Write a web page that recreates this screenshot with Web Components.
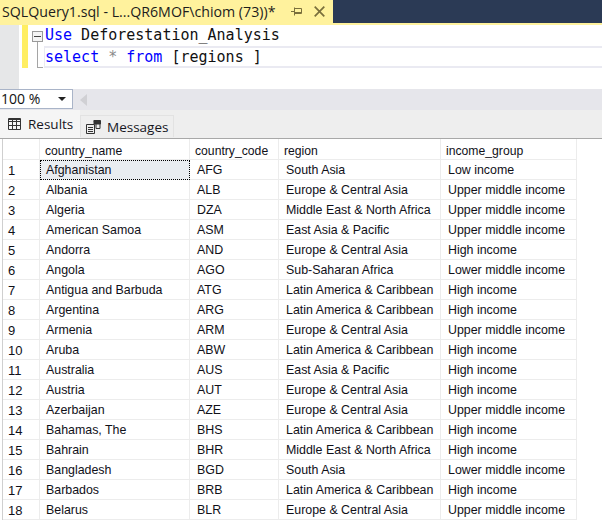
<!DOCTYPE html>
<html>
<head>
<meta charset="utf-8">
<title>SQLQuery1.sql</title>
<style>
    html, body { margin: 0; padding: 0; background: #fff; }
    body { width: 602px; height: 521px; overflow: hidden; font-family: "Liberation Sans", Arial, sans-serif; }
</style>
</head>
<body>
<doc-tab>SQLQuery1.sql - L...QR6MOF\chiom (73))*</doc-tab>
<sql-editor></sql-editor>
<zoom-bar value="100 %"></zoom-bar>
<result-tabs></result-tabs>
<result-grid></result-grid>
<script>
class DocTab extends HTMLElement {
    constructor() {
        super();
        this.attachShadow({ mode: 'open' });
        this.shadowRoot.innerHTML = `
            <style>
                :host { display: flex; height: 23px; background: #2b3a55; border-bottom: 2px solid #fff29d; }
                .tab {
                    width: 333px; display: flex; align-items: center; background: #fff29d; color: #1c1c1c;
                    font: 14.2px/23px "Open Sans", sans-serif; padding-left: 2px; box-sizing: border-box;
                }
                .title { flex: 1; white-space: nowrap; }
                svg { display: block; }
                .pin { margin-right: 12px; }
                .close { margin-right: 8px; }
            </style>
            <div class="tab">
                <span class="title"><slot></slot></span>
                <svg class="pin" width="11" height="11" viewBox="0 0 11 11" fill="none" stroke="#7a6f3c">
                    <path d="M0 5.5H3.5M3.5 1.5V9.5M3.5 2.5H10.5V7.5H3.5M4 6.5H10"/>
                </svg>
                <svg class="close" width="11" height="11" viewBox="0 0 11 11" fill="none" stroke="#7a6f3c" stroke-width="1.7">
                    <path d="M.7.7 10.3 10.3M10.3.7.7 10.3"/>
                </svg>
            </div>
        `;
    }
}

class SqlEditor extends HTMLElement {
    constructor() {
        super();
        this.attachShadow({ mode: 'open' });
        this.shadowRoot.innerHTML = `
            <style>
                :host { display: flex; height: 64px; background: #fff; }
                .gutter { width: 19px; background: #e6e7e8; flex: none; }
                .changes { width: 6px; height: 43px; margin-left: 3px; background: #ffee62; flex: none; }
                .fold { width: 12px; margin-left: 4px; padding-top: 6px; height: 37px; position: relative; flex: none; }
                .box { width: 9px; height: 9px; border: 1px solid #9a9a9a; background: #f4f4f4; position: relative; }
                .box::after { content: ''; position: absolute; left: 1px; right: 1px; top: 4px; height: 1px; background: #444; }
                .line { position: absolute; left: 5px; top: 17px; width: 5px; height: 25px; border-left: 1px solid #a5a5a5; border-bottom: 1px solid #a5a5a5; }
                .code { flex: 1; font: 15px/21px "DejaVu Sans Mono", monospace; color: #111; min-width: 0; }
                .row { height: 21px; padding-left: 1px; white-space: pre; }
                .row.current {
                    height: 18px; line-height: 18px; border: 2px solid #eaeaf2; border-left-width: 1px; border-right: 0; padding-left: 0;
                }
                .kw { color: #0000ff; }
                .op { color: #8a8a8a; }
            </style>
            <div class="gutter"></div>
            <div class="changes"></div>
            <div class="fold"><div class="box"></div><div class="line"></div></div>
            <div class="code">
                <div class="row"><span class="kw">Use</span> Deforestation_Analysis</div>
                <div class="row current"><span class="kw">select</span> <span class="op">*</span> <span class="kw">from</span> [regions ]</div>
            </div>
        `;
    }
}

class ZoomBar extends HTMLElement {
    constructor() {
        super();
        this.attachShadow({ mode: 'open' });
        this.shadowRoot.innerHTML = `
            <style>
                :host { display: flex; height: 21px; background: #e6e6eb; align-items: flex-start; }
                .combo {
                    width: 73px; height: 20px; box-sizing: border-box; background: #fff;
                    border: 1px solid #a9b4c8; border-left: 0; display: flex; align-items: center;
                    font: 14px/18px "Open Sans", sans-serif; color: #111; padding-left: 1px;
                }
                .value { flex: 1; }
                .arrow { width: 0; height: 0; border: 4px solid transparent; border-top-color: #222; border-bottom: 0; margin-right: 6px; }
                .left { width: 0; height: 0; margin: 5px 0 0 7px; border: 6px solid transparent; border-right: 7px solid #d0d0d4; border-left: 0; }
            </style>
            <div class="combo"><span class="value">${this.getAttribute('value') || ''}</span><span class="arrow"></span></div>
            <div class="left"></div>
        `;
    }
}

class ResultTabs extends HTMLElement {
    constructor() {
        super();
        this.attachShadow({ mode: 'open' });
        this.shadowRoot.innerHTML = `
            <style>
                :host {
                    display: flex; background: #eeeeee; border-bottom: 1px solid #a8a8a8;
                    box-sizing: border-box; height: 29px; align-items: flex-end;
                    font: 13.5px/20px "Open Sans", sans-serif; color: #16161e;
                }
                .tab { display: flex; align-items: center; box-sizing: border-box; }
                .results { width: 80px; height: 28px; background: #f5f5f5; padding-left: 8px; gap: 7px; }
                .messages { width: 94px; height: 22px; margin-bottom: 1px; border: 1px solid #e2e2e2; border-bottom: 0; padding-left: 5px; gap: 6px; }
                svg { display: block; flex: none; }
            </style>
            <div class="tab results">
                <svg width="13" height="12" viewBox="0 0 13 12" fill="none" stroke="#333">
                    <path d="M.5.5H12.5V11.5H.5ZM.5 3.5H12.5M.5 7.5H12.5M4.5.5V11.5M8.5.5V11.5" />
                    <path d="M.5 1.5H12.5" />
                </svg>
                <span>Results</span>
            </div>
            <div class="tab messages">
                <svg width="15" height="14" viewBox="0 0 15 14" fill="none" stroke="#333">
                    <path d="M.5 4.5H8.5V13.5H.5ZM2 7.5H7M2 9.5H7M2 11.5H7"/>
                    <path d="M7.5 1H14V8.5H10V4" />
                    <path d="M8 .5H14.5V4H8Z" fill="#333" />
                </svg>
                <span>Messages</span>
            </div>
        `;
    }
}

const RESULT_ROWS = [
    ['Afghanistan', 'AFG', 'South Asia', 'Low income'],
    ['Albania', 'ALB', 'Europe & Central Asia', 'Upper middle income'],
    ['Algeria', 'DZA', 'Middle East & North Africa', 'Upper middle income'],
    ['American Samoa', 'ASM', 'East Asia & Pacific', 'Upper middle income'],
    ['Andorra', 'AND', 'Europe & Central Asia', 'High income'],
    ['Angola', 'AGO', 'Sub-Saharan Africa', 'Lower middle income'],
    ['Antigua and Barbuda', 'ATG', 'Latin America & Caribbean', 'High income'],
    ['Argentina', 'ARG', 'Latin America & Caribbean', 'High income'],
    ['Armenia', 'ARM', 'Europe & Central Asia', 'Upper middle income'],
    ['Aruba', 'ABW', 'Latin America & Caribbean', 'High income'],
    ['Australia', 'AUS', 'East Asia & Pacific', 'High income'],
    ['Austria', 'AUT', 'Europe & Central Asia', 'High income'],
    ['Azerbaijan', 'AZE', 'Europe & Central Asia', 'Upper middle income'],
    ['Bahamas, The', 'BHS', 'Latin America & Caribbean', 'High income'],
    ['Bahrain', 'BHR', 'Middle East & North Africa', 'High income'],
    ['Bangladesh', 'BGD', 'South Asia', 'Lower middle income'],
    ['Barbados', 'BRB', 'Latin America & Caribbean', 'High income'],
    ['Belarus', 'BLR', 'Europe & Central Asia', 'Upper middle income']
];

class ResultGrid extends HTMLElement {
    constructor() {
        super();
        this.attachShadow({ mode: 'open' });
        const head = ['', 'country_name', 'country_code', 'region', 'income_group']
            .map(h => `<div class="h">${h}</div>`).join('');
        const rows = RESULT_ROWS.map((row, i) => `
            <div class="n">${i + 1}</div>
            ${row.map((v, c) => `<div class="c${c === 0 ? ' first' : ''}${i === 0 && c === 0 ? ' sel' : ''}">${v.replace('&', '&amp;')}</div>`).join('')}
        `).join('');
        this.shadowRoot.innerHTML = `
            <style>
                :host { display: block; background: #fff; padding-left: 2px; height: 382px; overflow: hidden; }
                .grid {
                    display: grid; grid-template-columns: 37px 150px 89px 162px 136px;
                    grid-template-rows: 21px; grid-auto-rows: 20px; width: 574px; border-left: 1px solid #cfcfcf;
                    font: 12.4px/19px "Liberation Sans", sans-serif; color: #101018;
                }
                .grid > div { box-sizing: border-box; border-right: 1px solid #ececec; border-bottom: 1px solid #ececec; white-space: nowrap; overflow: hidden; }
                .h { padding-left: 5px; line-height: 25px; font-size: 12.2px; }
                .n { padding-left: 5px; line-height: 22px; font-size: 13px; }
                .c { padding-left: 7px; line-height: 20px; }
                .c.first { padding-left: 6px; }
                .c.sel { background: #e9edf1; outline: 1px dotted #000; outline-offset: -1px; border: 0; }
            </style>
            <div class="grid">${head}${rows}</div>
        `;
    }
}

customElements.define('doc-tab', DocTab);
customElements.define('sql-editor', SqlEditor);
customElements.define('zoom-bar', ZoomBar);
customElements.define('result-tabs', ResultTabs);
customElements.define('result-grid', ResultGrid);
</script>
</body>
</html>
